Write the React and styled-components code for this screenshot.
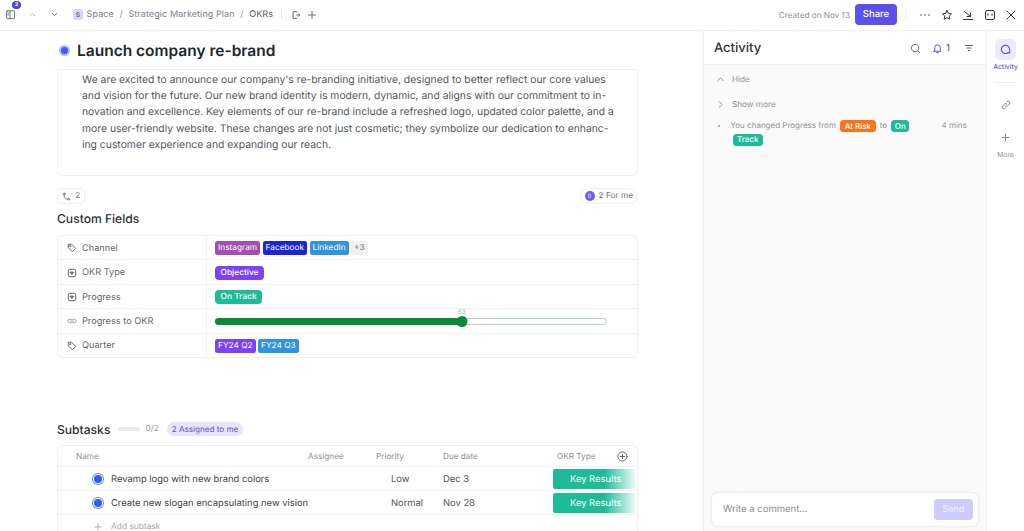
import React from "react";
import styled, { createGlobalStyle } from "styled-components";

const Global = createGlobalStyle`
  html, body { margin: 0; padding: 0; background: #fff; }
  body { font-family: Inter, "Noto Sans", sans-serif; color: #2a2e34; -webkit-font-smoothing: antialiased; text-rendering: geometricPrecision; }
  * { box-sizing: border-box; }
`;
const Page = styled.div`width:1024px;height:531px;overflow:hidden;display:flex;flex-direction:column;background:#fff;`;
const TopBar = styled.header`height:31px;flex:none;display:flex;align-items:center;border-bottom:1px solid #f0f0f0;padding:0 0 1px 5px;`;
const TopLeft = styled.div`display:flex;align-items:center;flex:1;min-width:0;`;
const LayoutButton = styled.div`position:relative;width:12px;height:14px;color:#6f7378;display:flex;align-items:center;`;
const NotifBadge = styled.span`position:absolute;left:7px;top:-7px;width:9px;height:8px;border-radius:4px;background:#4b46d6;color:#fff;font-size:5.5px;font-weight:700;display:flex;align-items:center;justify-content:center;`;
const NavGroup = styled.div`display:flex;align-items:center;gap:13px;margin-left:11px;margin-right:14px;`;
const Crumbs = styled.nav`display:flex;align-items:center;font-size:9px;color:#7c828b;gap:5.6px;letter-spacing:.09px;white-space:nowrap;`;
const SpaceMark = styled.span`width:10px;height:11px;background:#d9d6f8;border-radius:2.5px;color:#5a5a7a;font-size:6.5px;font-weight:600;display:flex;align-items:center;justify-content:center;margin-right:-2px;`;
const CrumbSep = styled.span`color:#8a8f96;`;
const CrumbCurrent = styled.span`color:#54585f;`;
const TopDivider = styled.span`width:1px;height:9px;background:#e6e6e6;margin:0 9px 0 8px;`;
const TopIcons = styled.div`display:flex;align-items:center;gap:6px;color:#6e7279;`;
const TopRight = styled.div`display:flex;align-items:center;color:#34373c;`;
const CreatedOn = styled.span`font-size:8.2px;color:#8c9097;margin-right:5px;white-space:nowrap;`;
const ShareButton = styled.button`width:42px;height:21px;border:0;border-radius:4px;background:#5b50e8;color:#fff;font:500 9.5px Inter,sans-serif;text-rendering:geometricPrecision;padding:0;margin-right:8px;`;
const RightDivider = styled.span`width:1px;height:15px;background:#f0f0f0;margin-right:13px;`;
const ActionIcons = styled.div`display:flex;align-items:center;gap:9.5px;width:105px;`;

const Body = styled.div`flex:1;display:flex;min-height:0;`;
const Main = styled.main`width:703px;flex:none;padding:0 65px 0 57px;`;
const TitleRow = styled.div`height:38px;display:flex;align-items:center;gap:9px;padding:1px 0 0 3px;`;
const TitleDot = styled.span`width:7px;height:7px;border-radius:50%;background:#3b5cf5;box-shadow:0 0 0 2px #aebcfb;margin-left:1px;margin-right:0;`;
const Title = styled.h1`margin:0;font-size:15.5px;font-weight:600;color:#22252a;line-height:20px;`;
const Description = styled.div`height:107px;border:1px solid #f0f0f0;border-radius:0 0 6px 6px;padding:2px 24px;font-size:10.35px;line-height:16.2px;color:#53575d;white-space:nowrap;`;
const ChipRow = styled.div`display:flex;justify-content:space-between;margin-top:12px;`;
const CountChip = styled.div`height:16px;border:1px solid #f1f1f1;border-radius:5px;display:flex;align-items:center;gap:4px;padding:0 4px;font-size:8.3px;color:#70747b;white-space:nowrap;`;
const ForMeChip = styled(CountChip)`border-radius:8px;`;
const Avatar = styled.span`width:10px;height:10px;border-radius:50%;background:#6b5cf0;color:#cfcaff;font-size:6px;display:flex;align-items:center;justify-content:center;flex:none;`;
const SectionTitle = styled.h2`margin:0;font-size:12.1px;font-weight:500;color:#2b2e33;line-height:15px;`;
const FieldsHeading = styled(SectionTitle)`margin-top:7px;`;
const FieldsCard = styled.div`margin-top:9px;border:1px solid #f0f0f0;border-radius:6px;height:123px;display:flex;flex-direction:column;`;
const FieldRow = styled.div`flex:1;display:grid;grid-template-columns:149px 1fr;align-items:stretch;border-top:${p => p.$first ? "0" : "1px solid #f2f2f2"};`;
const FieldName = styled.div`display:flex;align-items:center;gap:5px;padding:1px 0 0 9px;border-right:1px solid #f2f2f2;font-size:9.2px;color:#63676e;white-space:nowrap;`;
const FieldValue = styled.div`display:flex;align-items:center;gap:2.5px;padding:1px 0 0 8px;`;
const Tag = styled.span`height:14px;padding:0 3px;background:${p => p.$bg};color:${p => p.$fg || "#fff"};border-radius:2.5px;font-size:8.3px;display:inline-flex;align-items:center;`;
const Pill = styled.span`height:14px;padding:0 5.5px;background:${p => p.$bg};color:#fff;border-radius:4px;font-size:8.4px;font-weight:500;display:inline-flex;align-items:center;`;
const Slider = styled.div`position:relative;width:392px;height:7px;margin-top:1px;border:1px solid #b5d4bd;border-radius:3.5px;`;
const SliderFill = styled.div`position:absolute;left:-1px;top:-1px;bottom:-1px;background:#0b8a3a;border-radius:3.5px;`;
const SliderKnob = styled.span`position:absolute;width:11px;height:11px;border-radius:50%;background:#0b8a3a;top:-3px;transform:translateX(-50%);`;
const SliderLabel = styled.span`position:absolute;top:-11px;font-size:6.5px;color:#9cc3a7;transform:translateX(-50%);`;

const SubtasksHead = styled.div`display:flex;align-items:center;margin-top:63px;height:16px;`;
const ProgressTrack = styled.span`width:22px;height:4px;background:#ececec;border-radius:2px;margin:0 5px 0 8px;`;
const ProgressCount = styled.span`font-size:8.3px;color:#93979d;margin-right:8px;`;
const AssignedChip = styled.span`height:14px;border-radius:7px;background:#e7e4fb;color:#5d57c9;font-size:8.1px;padding:0 5px;display:flex;align-items:center;white-space:nowrap;`;
const SubtasksCard = styled.div`margin-top:8px;border:1px solid #f0f0f0;border-bottom:0;border-radius:6px 6px 0 0;height:100px;overflow:hidden;`;
const columns = "grid-template-columns:250px 68px 67px 114px 1fr;";
const HeadRow = styled.div`height:21px;display:grid;${columns}align-items:center;font-size:8.2px;color:#8b8f96;border-bottom:1px solid #f2f2f2;`;
const TaskRow = styled.div`height:24px;display:grid;${columns}align-items:center;font-size:9.4px;color:#53575e;border-bottom:1px solid #f2f2f2;white-space:nowrap;padding-top:1px;`;
const HeadName = styled.span`padding-left:18px;`;
const HeadLast = styled.span`display:flex;align-items:center;justify-content:space-between;padding-right:9px;`;
const TaskName = styled.span`display:flex;align-items:center;gap:9px;padding-left:36px;color:#3f4349;`;
const TaskDot = styled.span`width:8px;height:8px;border-radius:50%;background:#2f5cf5;box-shadow:0 0 0 1px #fff,0 0 0 2px #6d8bf8;flex:none;`;
const PriorityCell = styled.span`padding-left:15px;`;
const KeyResult = styled.span`height:20px;margin-left:-4px;margin-right:1px;border-radius:2px 0 0 2px;background:linear-gradient(90deg,#1dbb97 0%,#1dbb97 62%,rgba(29,187,151,.05) 100%);color:#fff;font-size:9.4px;display:flex;align-items:center;padding-left:17px;`;
const AddRow = styled.div`height:24px;display:flex;align-items:center;gap:9px;padding-left:36px;font-size:8.4px;color:#a2a5ab;`;

const Activity = styled.aside`width:284px;flex:none;border-left:1px solid #eee;border-right:1px solid #f2f2f2;background:#fafafa;display:flex;flex-direction:column;`;
const ActivityHead = styled.div`height:34px;flex:none;background:#fff;border-bottom:1px solid #f0f0f0;display:flex;align-items:center;padding:1px 12px 0 10px;`;
const ActivityTitle = styled.h2`margin:0;font-size:13px;font-weight:500;color:#2f3237;flex:1;`;
const HeadIcons = styled.div`display:flex;align-items:center;color:#6b6f75;`;
const Bell = styled.span`display:flex;align-items:center;gap:3px;color:#5d57e0;font-size:9.5px;font-weight:500;margin:0 14px 0 11px;`;
const ActivityBody = styled.div`flex:1;padding:0 9px 5px 12px;display:flex;flex-direction:column;`;
const Toggle = styled.div`display:flex;align-items:center;gap:7px;font-size:8.2px;color:#8e9298;height:12px;margin-top:${p => p.$mt}px;`;
const LogRow = styled.div`display:flex;margin-top:9px;font-size:8px;color:#8e9298;`;
const LogBullet = styled.span`width:2px;height:2px;border-radius:50%;background:#8e9298;margin:6px 11px 0 1.5px;flex:none;`;
const LogText = styled.div`width:211px;line-height:12.6px;`;
const LogTime = styled.span`line-height:13px;`;
const LogTag = styled.span`display:inline-flex;align-items:center;height:12px;padding:0 ${p => p.$px || 4.5}px;border-radius:3.5px;background:${p => p.$bg};color:#fff;font-size:8px;font-weight:500;margin:0 2px;vertical-align:-1px;`;
const CommentBox = styled.div`margin-top:auto;height:33px;background:#fff;border-radius:6px;box-shadow:0 0 3px rgba(0,0,0,.14);display:flex;align-items:center;justify-content:space-between;padding:0 5px 0 11px;margin-left:-4px;margin-right:-1px;font-size:9.5px;color:#8b8f95;`;
const SendButton = styled.span`width:39px;height:21px;border-radius:4px;background:#cfcbfa;color:#ecebfe;font-size:9px;font-weight:500;display:flex;align-items:center;justify-content:center;`;
const Rail = styled.nav`flex:1;background:#fff;display:flex;flex-direction:column;align-items:center;padding-top:8px;`;
const RailActive = styled.div`width:21px;height:21px;border-radius:5px;background:#ecebfd;color:#5d57e0;display:flex;align-items:center;justify-content:center;`;
const RailLabel = styled.span`font-size:6.8px;color:${p => p.$active ? "#5d57e0" : "#8d9197"};font-weight:${p => p.$active ? 500 : 400};margin-top:${p => p.$mt || 2}px;`;
const RailLine = styled.span`width:23px;height:1px;background:#f0f0f0;margin:11px 0 17px;`;
const RailIcon = styled.span`color:#7d8187;display:flex;margin-bottom:${p => p.$mb || 0}px;`;

const Svg = ({ s = 12, w = 1.3, children, ...r }) => (
  <svg width={s} height={s} viewBox="0 0 24 24" fill="none" stroke="currentColor" strokeWidth={w * 24 / s} strokeLinecap="round" strokeLinejoin="round" {...r}>{children}</svg>
);
const TagIcon = () => <Svg s={10} w={1}><path d="M3 4v7l10 10 8-8L11 3H4z" /><circle cx="7.5" cy="7.5" r="1.3" /></Svg>;
const DropIcon = () => <Svg s={10} w={1}><rect x="3" y="3" width="18" height="18" rx="4" /><path d="M8 10h8l-4 5z" fill="currentColor" /></Svg>;
const PillIcon = () => <Svg s={10} w={1} style={{ color: "#a6a9ae" }}><rect x="2" y="8" width="20" height="8" rx="4" /><path d="M8 12h8" /></Svg>;
const Plus = ({ s = 10, w = 1 }) => <Svg s={s} w={w}><path d="M12 3v18M3 12h18" /></Svg>;

const lines = [
  "We are excited to announce our company's re-branding initiative, designed to better reflect our core values",
  "and vision for the future. Our new brand identity is modern, dynamic, and aligns with our commitment to in-",
  "novation and excellence. Key elements of our re-brand include a refreshed logo, updated color palette, and a",
  "more user-friendly website. These changes are not just cosmetic; they symbolize our dedication to enhanc-",
  "ing customer experience and expanding our reach.",
];

export default function App() {
  return (
    <Page>
      <Global />
      <TopBar>
        <TopLeft>
          <LayoutButton>
            <Svg s={11} w={1}><rect x="3" y="4" width="18" height="17" rx="2" /><path d="M11 4v17M6 9h2M6 13h2" /></Svg>
            <NotifBadge>2</NotifBadge>
          </LayoutButton>
          <NavGroup>
            <Svg s={9} w={0.9} style={{ color: "#b5b8bd" }}><path d="M6 15l6-6 6 6" /></Svg>
            <Svg s={9} w={0.9} style={{ color: "#666a70" }}><path d="M6 9l6 6 6-6" /></Svg>
          </NavGroup>
          <Crumbs>
            <SpaceMark>S</SpaceMark>
            <span>Space</span><CrumbSep>/</CrumbSep>
            <span>Strategic Marketing Plan</span><CrumbSep>/</CrumbSep>
            <CrumbCurrent>OKRs</CrumbCurrent>
          </Crumbs>
          <TopDivider />
          <TopIcons>
            <Svg s={10} w={1}><path d="M14 4H5v16h9M14 12h7M18 9l3 3-3 3" /></Svg>
            <Plus s={10} w={1} />
          </TopIcons>
        </TopLeft>
        <TopRight>
          <CreatedOn>Created on Nov 13</CreatedOn>
          <ShareButton>Share</ShareButton>
          <RightDivider />
          <ActionIcons>
            <Svg s={12} w={1.5}><path d="M4 12h.01M12 12h.01M20 12h.01" strokeWidth="3" /></Svg>
            <Svg s={12} w={1}><path d="M12 3l2.8 5.8 6.2.9-4.5 4.4 1.1 6.3-5.6-3-5.6 3 1.1-6.3L3 9.7l6.2-.9z" /></Svg>
            <Svg s={12} w={1}><path d="M5 5l12 10M17 8v7h-7M3 21h18" /></Svg>
            <Svg s={12} w={1}><rect x="3" y="3" width="18" height="18" rx="3" /><path d="M8 10v3M16 10v3" /></Svg>
            <Svg s={12} w={1}><path d="M4 4l16 16M20 4L4 20" /></Svg>
          </ActionIcons>
        </TopRight>
      </TopBar>
      <Body>
        <Main>
          <TitleRow><TitleDot /><Title>Launch company re-brand</Title></TitleRow>
          <Description>{lines.map((l, i) => <div key={i}>{l}</div>)}</Description>
          <ChipRow>
            <CountChip><Svg s={9} w={0.9}><circle cx="6" cy="5" r="2.5" /><circle cx="18" cy="19" r="2.5" /><path d="M6 8v4c0 4 3 7 9 7" /></Svg>2</CountChip>
            <ForMeChip><Avatar>B</Avatar>2 For me</ForMeChip>
          </ChipRow>
          <FieldsHeading>Custom Fields</FieldsHeading>
          <FieldsCard>
            <FieldRow $first>
              <FieldName><TagIcon />Channel</FieldName>
              <FieldValue>
                <Tag $bg="#a14fb0">Instagram</Tag><Tag $bg="#1a24de">Facebook</Tag><Tag $bg="#2f93df">LinkedIn</Tag>
                <Tag $bg="#f0f0f1" $fg="#6c7077">+3</Tag>
              </FieldValue>
            </FieldRow>
            <FieldRow><FieldName><DropIcon />OKR Type</FieldName><FieldValue><Pill $bg="#7b42f6">Objective</Pill></FieldValue></FieldRow>
            <FieldRow><FieldName><DropIcon />Progress</FieldName><FieldValue><Pill $bg="#1dbb97">On Track</Pill></FieldValue></FieldRow>
            <FieldRow>
              <FieldName><PillIcon />Progress to OKR</FieldName>
              <FieldValue>
                <Slider>
                  <SliderFill style={{ width: "63%" }} />
                  <SliderKnob style={{ left: "63%" }} />
                  <SliderLabel style={{ left: "63%" }}>63</SliderLabel>
                </Slider>
              </FieldValue>
            </FieldRow>
            <FieldRow>
              <FieldName><TagIcon />Quarter</FieldName>
              <FieldValue><Tag $bg="#7b42f6">FY24 Q2</Tag><Tag $bg="#2f93df">FY24 Q3</Tag></FieldValue>
            </FieldRow>
          </FieldsCard>
          <SubtasksHead>
            <SectionTitle>Subtasks</SectionTitle>
            <ProgressTrack />
            <ProgressCount>0/2</ProgressCount>
            <AssignedChip>2 Assigned to me</AssignedChip>
          </SubtasksHead>
          <SubtasksCard>
            <HeadRow>
              <HeadName>Name</HeadName><span>Assignee</span><span>Priority</span><span>Due date</span>
              <HeadLast>OKR Type<Svg s={11} w={0.9} style={{ color: "#55595f" }}><circle cx="12" cy="12" r="10" /><path d="M12 7v10M7 12h10" /></Svg></HeadLast>
            </HeadRow>
            <TaskRow>
              <TaskName><TaskDot />Revamp logo with new brand colors</TaskName><span />
              <PriorityCell>Low</PriorityCell><span>Dec 3</span><KeyResult>Key Results</KeyResult>
            </TaskRow>
            <TaskRow>
              <TaskName><TaskDot />Create new slogan encapsulating new vision</TaskName><span />
              <PriorityCell>Normal</PriorityCell><span>Nov 28</span><KeyResult>Key Results</KeyResult>
            </TaskRow>
            <AddRow><Plus s={8} w={0.9} />Add subtask</AddRow>
          </SubtasksCard>
        </Main>
        <Activity>
          <ActivityHead>
            <ActivityTitle>Activity</ActivityTitle>
            <HeadIcons>
              <Svg s={11} w={1}><circle cx="11" cy="11" r="8" /><path d="M17 17l4 4" /></Svg>
              <Bell><Svg s={11} w={1}><path d="M6 16V10a6 6 0 0 1 12 0v6l2 2H4zM10 21h4" /></Svg>1</Bell>
              <Svg s={10} w={1}><path d="M3 6h18M7 12h10M10 18h4" /></Svg>
            </HeadIcons>
          </ActivityHead>
          <ActivityBody>
            <Toggle $mt={8}><Svg s={9} w={1}><path d="M5 15l7-7 7 7" /></Svg>Hide</Toggle>
            <Toggle $mt={13}><Svg s={9} w={1}><path d="M9 5l7 7-7 7" /></Svg>Show more</Toggle>
            <LogRow>
              <LogBullet />
              <LogText>You changed Progress from <LogTag $bg="#f9731b">At Risk</LogTag> to <LogTag $bg="#1dbb97" $px={3.5}>On</LogTag><br /><LogTag $bg="#1dbb97">Track</LogTag></LogText>
              <LogTime>4 mins</LogTime>
            </LogRow>
            <CommentBox>Write a comment...<SendButton>Send</SendButton></CommentBox>
          </ActivityBody>
        </Activity>
        <Rail>
          <RailActive><Svg s={11} w={1.1}><path d="M21 20l-3-1.5A9 9 0 1 1 21 12z" /></Svg></RailActive>
          <RailLabel $active>Activity</RailLabel>
          <RailLine />
          <RailIcon $mb={23}><Svg s={10} w={1}><path d="M10 14a4 4 0 0 0 6 0l4-4a4 4 0 0 0-6-6l-1 1M14 10a4 4 0 0 0-6 0l-4 4a4 4 0 0 0 6 6l1-1" /></Svg></RailIcon>
          <RailIcon><Plus s={9} w={0.9} /></RailIcon>
          <RailLabel $mt={8}>More</RailLabel>
        </Rail>
      </Body>
    </Page>
  );
}
